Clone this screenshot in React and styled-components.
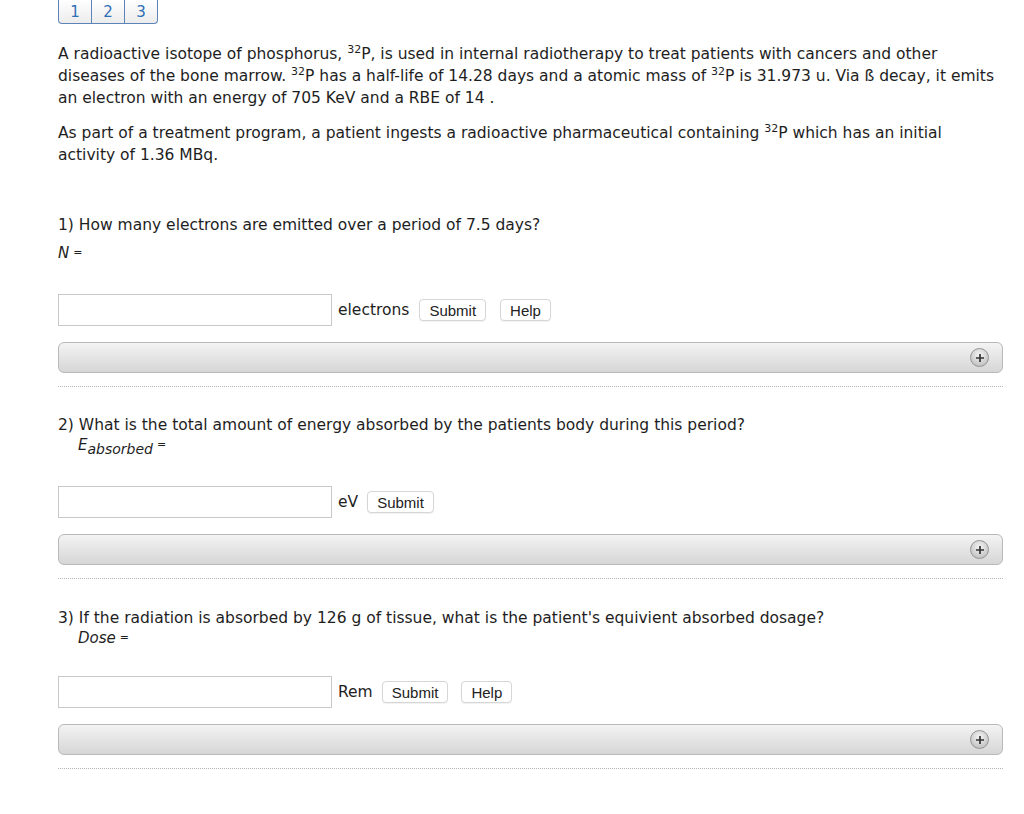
import styled, { createGlobalStyle } from 'styled-components'

const GlobalStyle = createGlobalStyle`
    body {
        margin: 0;
        background: #fff;
        font-family: "DejaVu Sans", Verdana, sans-serif;
        color: #1e1e1e;
    }
    sup {
        font-size: 11px;
        line-height: 0;
        vertical-align: 6px;
    }
`;

const Page = styled.div`
    width: 945px;
    padding-left: 58px;
`;

const Pager = styled.div`
    display: flex;
`;

const PageTab = styled.div`
    width: 32px;
    height: 23px;
    display: flex;
    align-items: center;
    justify-content: center;
    font-size: 15px;
    color: #2f6fb5;
    background: linear-gradient(#ffffff, #ececec);
    border: 1px solid #5d84b8;
    border-top: none;
    border-left-width: ${p => (p.first ? '1px' : '0')};
    border-radius: ${p => (p.first ? '0 0 0 4px' : p.last ? '0 0 4px 0' : '0')};
`;

const Para = styled.p`
    margin: ${p => p.top || '16px'} 0 0;
    font-size: 15.5px;
    line-height: 22px;
`;

const Question = styled.div`
    margin-top: ${p => p.top};
    font-size: 15.5px;
    line-height: 22px;
`;

const Answer = styled.div`
    margin-top: ${p => p.top || '6px'};
    padding-left: ${p => p.indent || '0'};
    font-size: 15px;
    font-style: italic;
    line-height: 18px;
`;

const Sub = styled.sub`
    font-size: 14px;
    line-height: 0;
    vertical-align: -4px;
`;

const Eq = styled.span`
    font-style: normal;
    font-size: 11px;
    vertical-align: 2px;
    margin-left: 4px;
`;

const AnswerRow = styled.div`
    display: flex;
    align-items: center;
    margin-top: ${p => p.top};
`;

const Input = styled.input`
    width: 274px;
    height: 32px;
    box-sizing: border-box;
    border: 1px solid #c9c9c9;
    margin: 0;
    padding: 0 6px;
    &:focus {
        outline: none;
    }
`;

const Unit = styled.span`
    margin-left: 6px;
    font-size: 15.5px;
`;

const Button = styled.button`
    margin-left: ${p => p.gap || '10px'};
    height: 22px;
    padding: 0 9px;
    font-family: "Liberation Sans", Arial, sans-serif;
    font-size: 15px;
    color: #222;
    background: #fff;
    border: 1px solid #d6d6d6;
    border-radius: 4px;
    box-shadow: 0 1px 1px rgba(0, 0, 0, 0.06);
`;

const Bar = styled.div`
    margin-top: 16px;
    height: 31px;
    box-sizing: border-box;
    border: 1px solid #b9b9b9;
    border-radius: 6px;
    background: linear-gradient(#f3f3f3, #d6d6d6);
    display: flex;
    align-items: center;
    justify-content: flex-end;
    padding-right: 13px;
`;

const PlusIcon = styled.span`
    width: 19px;
    height: 19px;
    box-sizing: border-box;
    border-radius: 50%;
    border: 1px solid #959595;
    background: radial-gradient(circle at 50% 35%, #f4f4f4, #b5b5b5);
    display: flex;
    align-items: center;
    justify-content: center;
`;

const Divider = styled.div`
    margin-top: 13px;
    border-top: 1px dotted #b5b5b5;
`;

const Plus = () => (
    <PlusIcon>
        <svg width="10" height="10" viewBox="0 0 10 10">
            <path d="M5 1v8M1 5h8" stroke="#333" strokeWidth="1.7" />
        </svg>
    </PlusIcon>
);

const Hint = () => (
    <>
        <Bar>
            <Plus />
        </Bar>
        <Divider />
    </>
);

const App = () => {
    return (
        <Page>
            <GlobalStyle />
            <Pager>
                <PageTab first>1</PageTab>
                <PageTab>2</PageTab>
                <PageTab last>3</PageTab>
            </Pager>
            <Para top="19px">
                A radioactive isotope of phosphorus, <sup>32</sup>P, is used in internal radiotherapy to treat patients with cancers and other diseases of the bone marrow. <sup>32</sup>P has a half-life of 14.28 days and a atomic mass of <sup>32</sup>P is 31.973 u. Via ß decay, it emits an electron with an energy of 705 KeV and a RBE of 14 .
            </Para>
            <Para top="13px">
                As part of a treatment program, a patient ingests a radioactive pharmaceutical containing <sup>32</sup>P which has an initial activity of 1.36 MBq.
            </Para>

            <Question top="48px">1) How many electrons are emitted over a period of 7.5 days?</Question>
            <Answer top="8px">N<Eq>=</Eq></Answer>
            <AnswerRow top="32px">
                <Input />
                <Unit>electrons</Unit>
                <Button gap="10px">Submit</Button>
                <Button gap="14px">Help</Button>
            </AnswerRow>
            <Hint />

            <Question top="27px">2) What is the total amount of energy absorbed by the patients body during this period?</Question>
            <Answer top="0px" indent="20px">E<Sub>absorbed</Sub><Eq>=</Eq></Answer>
            <AnswerRow top="32px">
                <Input />
                <Unit>eV</Unit>
                <Button gap="9px">Submit</Button>
            </AnswerRow>
            <Hint />

            <Question top="28px">3) If the radiation is absorbed by 126 g of tissue, what is the patient's equivient absorbed dosage?</Question>
            <Answer top="0px" indent="20px">Dose<Eq>=</Eq></Answer>
            <AnswerRow top="29px">
                <Input />
                <Unit>Rem</Unit>
                <Button gap="9px">Submit</Button>
                <Button gap="13px">Help</Button>
            </AnswerRow>
            <Hint />
        </Page>
    )
}

export default App
